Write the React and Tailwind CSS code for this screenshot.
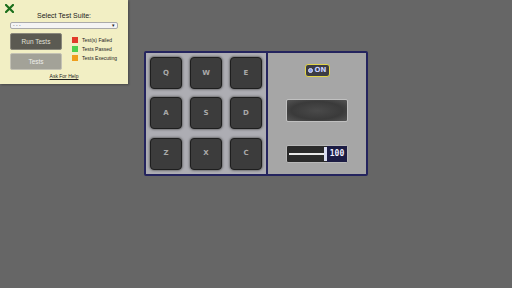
import React from "react";

const Key = ({ k }) => (
  <div className="w-[32px] h-[32px] rounded-[4px] bg-[#3c3c3c] border border-[#1e1e1e] shadow-[0_0_2px_1px_rgba(90,90,90,0.7)] flex items-center justify-center">
    <span className="text-[7px] font-bold text-[#a9a9a9]" style={{ fontFamily: '"DejaVu Sans", sans-serif' }}>{k}</span>
  </div>
);

export default function App() {
  const keys = ["Q", "W", "E", "A", "S", "D", "Z", "X", "C"];
  return (
    <div className="w-[512px] h-[288px] bg-[#666666] relative overflow-hidden" style={{ fontFamily: '"Liberation Sans", Arial, sans-serif' }}>
      {/* test panel */}
      <div className="absolute left-0 top-0 w-[128px] h-[84px] bg-[#f2efc4] shadow-[1px_1px_2px_rgba(0,0,0,0.3)] flex flex-col">
        <div className="h-[14px] pl-[5px] pt-[4px]">
          <svg width="9" height="9" viewBox="0 0 9 9">
            <path d="M1 1 L8 8 M8 1 L1 8" stroke="#1b6e1b" strokeWidth="2.2" strokeLinecap="square" />
          </svg>
        </div>
        <div className="text-center text-[7px] leading-[8px] text-[#222] mt-[-2px]">Select Test Suite:</div>
        <div className="mx-[10px] mt-[2px] h-[7px] bg-[#f4f4f4] border border-[#aaa] rounded-[2px] flex items-center justify-between px-[2px]">
          <span className="text-[5px] leading-[5px] text-[#666]">- - -</span>
          <span className="text-[5px] leading-[5px] text-[#222]">▾</span>
        </div>
        <div className="flex mt-[4px] pl-[10px]">
          <div className="flex flex-col gap-[3px]">
            <div className="w-[52px] h-[17px] rounded-[2px] bg-[#5b5a52] border border-[#8a887c] flex items-center justify-center text-[6.5px] text-[#e0e0d8]">Run Tests</div>
            <div className="w-[52px] h-[17px] rounded-[2px] bg-[#a3a298] border border-[#c4c2b4] flex items-center justify-center text-[6.5px] text-[#eeeeea]">Tests</div>
          </div>
          <div className="flex flex-col gap-[3px] ml-[10px] mt-[4px]">
            <div className="flex items-center gap-[4px]"><div className="w-[6px] h-[6px] bg-[#e23a2a]" /><span className="text-[5px] leading-[6px] text-[#222]">Test(s) Failed</span></div>
            <div className="flex items-center gap-[4px]"><div className="w-[6px] h-[6px] bg-[#4fcf4f]" /><span className="text-[5px] leading-[6px] text-[#222]">Tests Passed</span></div>
            <div className="flex items-center gap-[4px]"><div className="w-[6px] h-[6px] bg-[#ef9e1c]" /><span className="text-[5px] leading-[6px] text-[#222]">Tests Executing</span></div>
          </div>
        </div>
        <div className="text-center text-[5px] leading-[6px] underline text-[#222] mt-[3px]">Ask For Help</div>
      </div>

      {/* device */}
      <div className="absolute left-[144px] top-[51px] w-[224px] h-[125px] border-2 border-[#24245e] rounded-[2px] flex">
        <div className="w-[120px] h-full bg-[#adadb3] grid grid-cols-3 gap-[8px] p-[4px] pl-[4px]">
          {keys.map((k) => <Key key={k} k={k} />)}
        </div>
        <div className="w-[2px] h-full bg-[#24245e]" />
        <div className="flex-1 bg-[#a6a6a6] flex flex-col items-center">
          <div className="mt-[11px] w-[25px] h-[13px] rounded-[3px] border-[1.5px] border-[#e2d548] bg-[#3c3c44] flex items-center pl-[2px] gap-[2px]">
            <div className="w-[5px] h-[5px] rounded-full bg-[#8aa0f0] border border-[#dde]" />
            <span className="text-[7px] leading-[7px] text-[#c8d0ff] font-bold" style={{ fontFamily: '"DejaVu Sans", sans-serif' }}>ON</span>
          </div>
          <div className="mt-[22px] w-[62px] h-[23px] rounded-[2px] border border-[#c0c0c0] bg-[radial-gradient(ellipse_at_center,#4a4a4a,#3a3a3a_60%,#555)]" />
          <div className="mt-[23px] w-[62px] h-[18px] rounded-[2px] border border-[#b8b8b8] bg-[#2a2a2a] flex items-center">
            <div className="relative w-[40px] h-full">
              <div className="absolute left-[2px] right-[2px] top-[7px] h-[2px] bg-[#e8e8e8]" />
              <div className="absolute right-0 top-[1px] w-[3px] h-[14px] bg-[#d8dcf0]" />
            </div>
            <div className="flex-1 h-full bg-[#1c1c44] flex items-center justify-center text-[8px] font-bold text-[#eef]" style={{ fontFamily: '"DejaVu Sans Mono", monospace' }}>100</div>
          </div>
        </div>
      </div>
    </div>
  );
}
